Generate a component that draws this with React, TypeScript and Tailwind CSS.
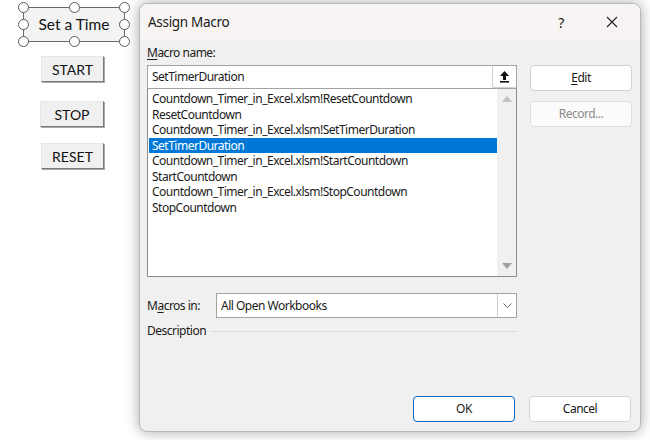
import React from "react";

const items = [
  "Countdown_Timer_in_Excel.xlsm!ResetCountdown",
  "ResetCountdown",
  "Countdown_Timer_in_Excel.xlsm!SetTimerDuration",
  "SetTimerDuration",
  "Countdown_Timer_in_Excel.xlsm!StartCountdown",
  "StartCountdown",
  "Countdown_Timer_in_Excel.xlsm!StopCountdown",
  "StopCountdown",
];

function Handle({ className }: { className: string }) {
  return (
    <span
      className={`absolute w-[11px] h-[11px] rounded-full bg-white border-[1.5px] border-[#5a5a5a] ${className}`}
    />
  );
}

function SheetButton({ label, className }: { label: string; className?: string }) {
  return (
    <div
      className={`h-[26px] w-[63px] flex items-center justify-center bg-[#f0f0f0] border border-t-[#e6e6e6] border-l-[#e6e6e6] border-r-[#7a7a7a] border-b-[#7a7a7a] shadow-[1px_1px_0_#a8a8a8] text-[14px] text-[#111] ${className ?? ""}`}
      style={{ fontFamily: "Lato, 'Open Sans', sans-serif" }}
    >
      {label}
    </div>
  );
}

export default function App() {
  return (
    <div
      className="w-[650px] h-[440px] bg-white flex overflow-hidden"
      style={{ fontFamily: "'Noto Sans', 'Open Sans', sans-serif" }}
    >
      {/* Sheet canvas */}
      <div className="w-[139px] shrink-0 flex flex-col">
        <div className="relative ml-[23px] mt-[7px] w-[102px] h-[35px] bg-[#f3f3f3] border border-[#6a6a6a] flex items-center justify-center">
          <span
            className="text-[15.5px] text-[#111]"
            style={{ fontFamily: "Lato, 'Open Sans', sans-serif" }}
          >
            Set a Time
          </span>
          <Handle className="-left-[6px] -top-[6px]" />
          <Handle className="left-[45px] -top-[6px]" />
          <Handle className="-right-[6px] -top-[6px]" />
          <Handle className="-left-[6px] top-[11px]" />
          <Handle className="-right-[6px] top-[11px]" />
          <Handle className="-left-[6px] -bottom-[6px]" />
          <Handle className="left-[45px] -bottom-[6px]" />
          <Handle className="-right-[6px] -bottom-[6px]" />
        </div>
        <SheetButton label="START" className="ml-[41px] mt-[14px]" />
        <SheetButton label="STOP" className="ml-[40px] mt-[19px] w-[64px]" />
        <SheetButton label="RESET" className="ml-[41px] mt-[16px]" />
      </div>

      {/* Dialog */}
      <div className="mt-[3px] w-[502px] h-[429px] rounded-[8px] border border-[#b8b8b8] bg-[#f0f0f0] shadow-[0_0_14px_rgba(0,0,0,0.35)] flex flex-col overflow-hidden text-[12px] tracking-[-0.5px] text-[#1a1a1a]">
        {/* Title bar */}
        <div className="h-[36px] shrink-0 bg-[#f8f4f3] flex items-center pl-[8px]">
          <span className="text-[13.5px] tracking-[-0.3px] text-[#1a1a1a] flex-1">Assign Macro</span>
          <span className="w-[20px] text-center text-[14px] mr-[35px]">?</span>
          <svg width="12" height="12" viewBox="0 0 12 12" className="mr-[22px]">
            <path d="M1 1 L11 11 M11 1 L1 11" stroke="#222" strokeWidth="1.1" />
          </svg>
        </div>

        {/* Body */}
        <div className="flex pl-[7px] pt-[5px]">
          {/* left column */}
          <div className="w-[370px] flex flex-col">
            <div className="h-[16px] leading-[16px]">
              <span className="underline underline-offset-2">M</span>acro name:
            </div>
            <div className="mt-[4px] h-[24px] bg-white border border-[#a3a3a3] flex items-center">
              <span className="pl-[4px] flex-1">SetTimerDuration</span>
              <div className="w-[24px] h-[22px] border-l border-b border-[#d0d0d0] rounded-[2px] flex items-center justify-center">
                <svg width="11" height="13" viewBox="0 0 11 13">
                  <path d="M5.5 1 L10 6 H7 V10 H4 V6 H1 Z" fill="#111" />
                  <rect x="1" y="11" width="9" height="1.6" fill="#111" />
                </svg>
              </div>
            </div>
            <div className="h-[188px] bg-white border border-[#8c8c8c] border-t-0 flex">
              <div className="flex-1 pt-[2px] pl-[1px]">
                {items.map((it, i) => (
                  <div
                    key={i}
                    className={`h-[15.5px] leading-[15.5px] pl-[3px] whitespace-nowrap ${
                      i === 3 ? "bg-[#0078d7] text-white" : ""
                    }`}
                  >
                    {it}
                  </div>
                ))}
              </div>
              <div className="w-[19px] bg-[#f0f0f0] flex flex-col items-center justify-between py-[7px]">
                <svg width="10" height="6" viewBox="0 0 10 6">
                  <path d="M0 6 L5 0 L10 6 Z" fill="#c2c2c2" />
                </svg>
                <svg width="10" height="6" viewBox="0 0 10 6">
                  <path d="M0 0 L5 6 L10 0 Z" fill="#a0a0a0" />
                </svg>
              </div>
            </div>
            <div className="mt-[16px] flex items-center h-[25px]">
              <span className="w-[69px]">
                M<span className="underline underline-offset-2">a</span>cros in:
              </span>
              <div className="flex-1 h-[25px] bg-white border border-[#a3a3a3] flex items-center">
                <span className="pl-[4px] flex-1">All Open Workbooks</span>
                <div className="w-[19px] h-full border-l border-[#d0d0d0] flex items-center justify-center">
                  <svg width="9" height="5" viewBox="0 0 9 5">
                    <path d="M0.5 0.5 L4.5 4.5 L8.5 0.5" stroke="#666" strokeWidth="1" fill="none" />
                  </svg>
                </div>
              </div>
            </div>
            <div className="mt-[5px] flex items-center h-[16px]">
              <span>Description</span>
              <div className="flex-1 ml-[5px] h-px bg-[#dcdcdc]" />
            </div>
          </div>

          {/* right column */}
          <div className="ml-[13px] w-[102px] flex flex-col gap-[10px] pt-[20px]">
            <div className="h-[26px] rounded-[4px] bg-white border border-[#d2d2d2] flex items-center justify-center">
              <span>
                <span className="underline underline-offset-2">E</span>dit
              </span>
            </div>
            <div className="h-[26px] rounded-[4px] bg-[#fbfbfb] border border-[#dedede] flex items-center justify-center text-[#8a8a8a]">
              Record...
            </div>
          </div>
        </div>

        <div className="flex-1" />

        {/* bottom buttons */}
        <div className="flex justify-end gap-[14px] pr-[9px] pb-[9px]">
          <div className="w-[102px] h-[26px] rounded-[4px] bg-white border border-[#0067c0] flex items-center justify-center">
            OK
          </div>
          <div className="w-[102px] h-[26px] rounded-[4px] bg-white border border-[#d2d2d2] flex items-center justify-center">
            Cancel
          </div>
        </div>
      </div>
    </div>
  );
}
